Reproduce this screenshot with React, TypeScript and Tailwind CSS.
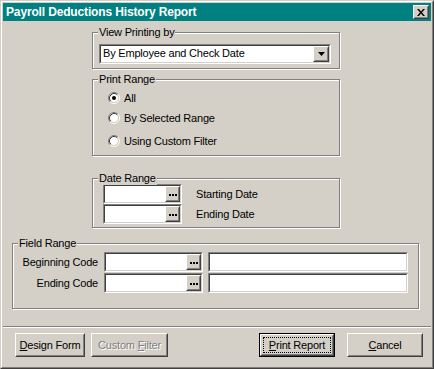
import React from "react";

const FONT = "font-['Liberation_Sans',Arial,sans-serif]";

function Raised({ className = "", children }: { className?: string; children?: React.ReactNode }) {
  return (
    <div className={`border border-t-white border-l-white border-r-[#404040] border-b-[#404040] bg-[#d4d0c8] ${className}`}>
      <div className="relative w-full h-full border border-t-[#d4d0c8] border-l-[#d4d0c8] border-r-[#808080] border-b-[#808080] flex items-center justify-center">
        {children}
      </div>
    </div>
  );
}

function Sunken({ className = "", children }: { className?: string; children?: React.ReactNode }) {
  return (
    <div className={`border border-t-[#808080] border-l-[#808080] border-r-white border-b-white ${className}`}>
      <div className="w-full h-full border border-t-[#404040] border-l-[#404040] border-r-[#d4d0c8] border-b-[#d4d0c8] bg-white flex">
        {children}
      </div>
    </div>
  );
}

function Dots() {
  return (
    <div className="flex gap-px mt-px">
      <div className="w-[2px] h-[2px] bg-black" />
      <div className="w-[2px] h-[2px] bg-black" />
      <div className="w-[2px] h-[2px] bg-black" />
    </div>
  );
}

function InputBtn({ className = "" }: { className?: string }) {
  return (
    <Sunken className={`h-[20px] ${className}`}>
      <div className="flex-1" />
      <Raised className="w-[15px] h-full">
        <Dots />
      </Raised>
    </Sunken>
  );
}

function Radio({ checked = false }: { checked?: boolean }) {
  return (
    <svg width="12" height="12" viewBox="0 0 12 12" className="shrink-0">
      <circle cx="6" cy="6" r="4" fill="white" />
      <path d="M 2.11 9.89 A 5.5 5.5 0 0 1 9.89 2.11" stroke="#808080" fill="none" />
      <path d="M 9.89 2.11 A 5.5 5.5 0 0 1 2.11 9.89" stroke="#ffffff" fill="none" />
      <path d="M 2.82 9.18 A 4.5 4.5 0 0 1 9.18 2.82" stroke="#404040" fill="none" />
      <path d="M 9.18 2.82 A 4.5 4.5 0 0 1 2.82 9.18" stroke="#d4d0c8" fill="none" />
      {checked && <circle cx="6" cy="6" r="2" fill="black" />}
    </svg>
  );
}

function RadioRow({ label, checked = false, className = "" }: { label: string; checked?: boolean; className?: string }) {
  return (
    <div className={`flex items-center gap-[4px] h-[16px] ${className}`}>
      <Radio checked={checked} />
      <span>{label}</span>
    </div>
  );
}

function Group({ label, className = "", children }: { label: string; className?: string; children?: React.ReactNode }) {
  return (
    <div className={`relative shrink-0 border border-[#808080] shadow-[inset_1px_1px_0_#ffffff,1px_1px_0_#ffffff] ${className}`}>
      <span className="absolute left-[5px] -top-[7px] px-px bg-[#d4d0c8] leading-[13px]">{label}</span>
      {children}
    </div>
  );
}

function XIcon() {
  return (
    <svg width="8" height="7" viewBox="0 0 8 7">
      <path d="M0 0h2l2 2.5L6 0h2L5 3.5 8 7H6L4 4.5 2 7H0l3-3.5z" fill="black" />
    </svg>
  );
}

function Arrow() {
  return (
    <svg width="7" height="4" viewBox="0 0 7 4">
      <path d="M0 0h7L3.5 4z" fill="black" />
    </svg>
  );
}

function FieldRow({ label, className = "" }: { label: string; className?: string }) {
  return (
    <div className={`flex items-center h-[20px] ${className}`}>
      <span className="w-[85px] text-right">{label}</span>
      <InputBtn className="ml-[6px] w-[99px]" />
      <Sunken className="ml-[5px] w-[200px] h-[20px]" />
    </div>
  );
}

export default function App() {
  return (
    <div className={`w-[434px] h-[369px] ${FONT} text-[11px] leading-[13px] tracking-[-0.2px] text-black`}>
      <div className="w-full h-full border border-t-[#d4d0c8] border-l-[#d4d0c8] border-r-[#404040] border-b-[#404040] bg-[#d4d0c8]">
        <div className="w-full h-full border border-t-white border-l-white border-r-[#808080] border-b-[#808080] p-px flex flex-col">
          {/* Title bar */}
          <div className="h-[18px] shrink-0 bg-[#008080] flex items-center justify-between pl-[3px] pr-[2px]">
            <span className="text-white font-bold text-[12px] leading-[18px] tracking-[-0.15px]">Payroll Deductions History Report</span>
            <Raised className="w-[16px] h-[14px]">
              <XIcon />
            </Raised>
          </div>

          {/* Body */}
          <div className="flex-1 flex flex-col">
            <Group label="View Printing by" className="ml-[89px] mt-[11px] w-[248px] h-[37px] pt-[11px] pl-[6px]">
              <Sunken className="w-[232px] h-[20px]">
                <span className="flex-1 pl-[2px] leading-[15px]">By Employee and Check Date</span>
                <Raised className="w-[16px] h-full">
                  <Arrow />
                </Raised>
              </Sunken>
            </Group>

            <Group label="Print Range" className="ml-[89px] mt-[10px] w-[248px] h-[77px] pt-[10px] pl-[15px] flex flex-col">
              <RadioRow checked label="All" />
              <RadioRow label="By Selected Range" className="mt-[4px]" />
              <RadioRow label="Using Custom Filter" className="mt-[7px]" />
            </Group>

            <Group label="Date Range" className="ml-[89px] mt-[22px] w-[248px] h-[50px] pt-[5px] pl-[10px]">
              <div className="flex items-center h-[20px]">
                <InputBtn className="w-[79px]" />
                <span className="ml-[14px]">Starting Date</span>
              </div>
              <div className="flex items-center h-[20px]">
                <InputBtn className="w-[79px]" />
                <span className="ml-[14px]">Ending Date</span>
              </div>
            </Group>

            <Group label="Field Range" className="ml-[9px] mt-[15px] w-[407px] h-[66px] pt-[8px]">
              <FieldRow label="Beginning Code" />
              <FieldRow label="Ending Code" className="mt-px" />
            </Group>

            <div className="mt-[17px] h-[2px] shrink-0 border-y border-t-[#808080] border-b-white" />

            <div className="mt-[5px] flex pl-[12px]">
              <Raised className="w-[70px] h-[24px]">
                <span>
                  <span className="underline">D</span>esign Form
                </span>
              </Raised>
              <Raised className="ml-[6px] w-[77px] h-[24px]">
                <span className="text-[#808080] [text-shadow:1px_1px_0_#ffffff]">
                  Custom <span className="underline">F</span>ilter
                </span>
              </Raised>
              <div className="ml-[91px] w-[76px] h-[24px] border border-black">
                <Raised className="w-full h-full">
                  <div className="absolute inset-[1px] border border-dotted border-black" />
                  <span>
                    <span className="underline">P</span>rint Report
                  </span>
                </Raised>
              </div>
              <Raised className="ml-[12px] w-[76px] h-[24px]">
                <span>
                  <span className="underline">C</span>ancel
                </span>
              </Raised>
            </div>
          </div>
        </div>
      </div>
    </div>
  );
}
